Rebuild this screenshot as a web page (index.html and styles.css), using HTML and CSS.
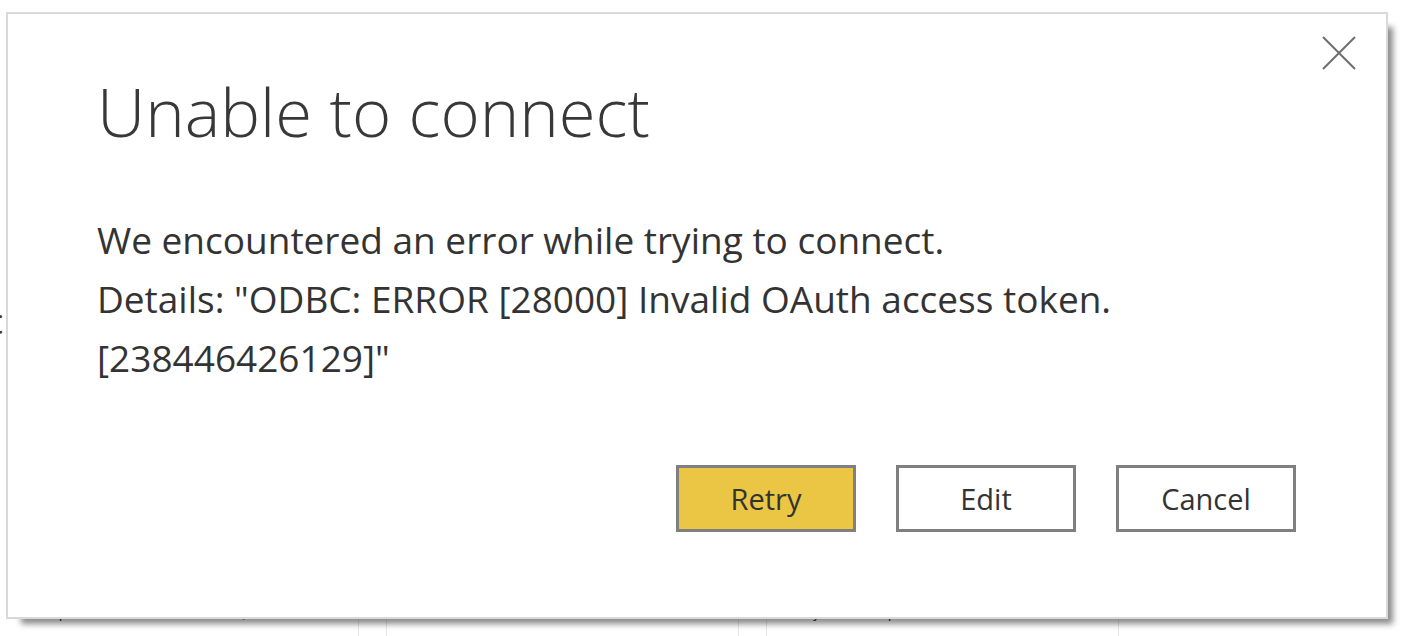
FILE: index.html
```html
<!DOCTYPE html>
<html lang="en">
<head>
<meta charset="utf-8">
<title>Unable to connect</title>
<link rel="stylesheet" href="styles.css">
</head>
<body>
<div class="backdrop">
  <div class="bd-top"></div>
  <div class="bd-frag"><span class="frag-c">c</span></div>
  <div class="bd-fill"></div>
  <div class="bd-row">
    <div class="cell c1"><span class="tick t1">p</span><span class="tick t2">,</span></div>
    <div class="cell c2"></div>
    <div class="cell c3"></div>
    <div class="cell c4"></div>
    <div class="cell c5"><span class="tick t3">y</span><span class="tick t4">p</span></div>
    <div class="cell c6"></div>
  </div>
</div>
<div class="dialog" role="dialog" aria-labelledby="dlg-title">
  <button class="close" aria-label="Close">
    <svg viewBox="0 0 34 34" width="34" height="34" aria-hidden="true">
      <path d="M1 1 L33 33 M33 1 L1 33" fill="none" stroke="#6e6e6e" stroke-width="2"/>
    </svg>
  </button>
  <h1 class="title" id="dlg-title">Unable to connect</h1>
  <div class="message">
    <p>We encountered an error while trying to connect.</p>
    <p>Details: "ODBC: ERROR [28000] Invalid OAuth access token. [238446426129]"</p>
  </div>
  <div class="actions">
    <button class="btn btn-primary">Retry</button>
    <button class="btn">Edit</button>
    <button class="btn">Cancel</button>
  </div>
</div>
</body>
</html>
```
FILE: styles.css
```css
html, body {
  margin: 0;
  padding: 0;
}
body {
  width: 1404px;
  height: 636px;
  overflow: hidden;
  position: relative;
  background: #ffffff;
  font-family: "Open Sans", "Noto Sans", sans-serif;
}

/* content behind the dialog */
.backdrop {
  height: 636px;
  display: flex;
  flex-direction: column;
}
.bd-top {
  height: 296px;
}
.bd-frag {
  height: 50px;
  font-size: 34px;
  line-height: 50px;
  color: #333;
  overflow: hidden;
}
.frag-c {
  margin-left: -13px;
}
.bd-fill {
  flex: 1;
}
.bd-row {
  height: 40px;
  display: flex;
  font-family: "Liberation Sans", sans-serif;
  font-size: 14px;
  line-height: 20px;
  color: #333;
}
.cell {
  box-sizing: border-box;
  border-right: 1px solid #e6e6e6;
  padding-top: 7px;
  white-space: nowrap;
}
.c1 { width: 359px; }
.c2 { width: 28px; }
.c3 { width: 352px; }
.c4 { width: 28px; }
.c5 { width: 352px; }
.c6 { flex: 1; border-right: none; }
.tick { display: inline-block; }
.t1 { margin-left: 59px; }
.t2 { margin-left: 175px; }
.t3 { margin-left: 46px; }
.t4 { margin-left: 68px; }

/* dialog */
.dialog {
  position: absolute;
  left: 6px;
  top: 12px;
  width: 1382px;
  height: 607px;
  box-sizing: border-box;
  border: 2px solid #d9d9d9;
  background: #ffffff;
  box-shadow: 10px 10px 6px -5px rgba(0, 0, 0, 0.45);
  padding: 59px 90px 0 89px;
  color: #333333;
}
.close {
  position: absolute;
  top: 22px;
  right: 30px;
  width: 34px;
  height: 34px;
  padding: 0;
  border: none;
  background: transparent;
  display: flex;
}
.title {
  margin: 0;
  font-size: 67px;
  font-weight: 300;
  line-height: 76px;
  color: #383838;
}
.message {
  margin-top: 61px;
  font-size: 37px;
  line-height: 59px;
}
.message p {
  margin: 0;
}
.actions {
  margin-top: 78px;
  display: flex;
  justify-content: flex-end;
  gap: 40px;
}
.btn {
  width: 180px;
  height: 67px;
  box-sizing: border-box;
  border: 3px solid #7f7f7f;
  background: #ffffff;
  font-family: "Open Sans", "Noto Sans", sans-serif;
  font-size: 29px;
  color: #333333;
  padding: 0;
}
.btn-primary {
  background: #eac644;
}
```
